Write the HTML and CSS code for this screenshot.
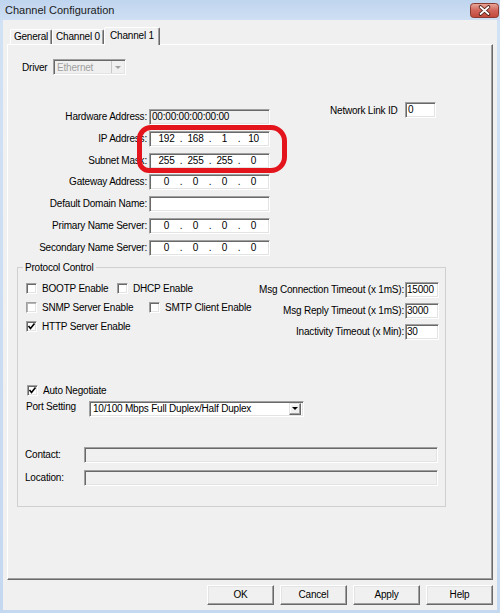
FILE: index.html
```html
<!DOCTYPE html>
<html lang="en">

<head>
    <meta charset="UTF-8">
    <title>Channel Configuration</title>
    <link rel="stylesheet" href="styles.css">
</head>

<body>
    <div class="window">
        <!-- title bar -->
        <div class="titlebar">
            <span class="title">Channel Configuration</span>
            <div class="close">
                <svg width="29" height="15" viewBox="0 0 29 15">
                    <defs>
                        <linearGradient id="cg" x1="0" y1="0" x2="0" y2="1">
                            <stop offset="0" stop-color="#e9a99b" />
                            <stop offset="0.5" stop-color="#d0645a" />
                            <stop offset="1" stop-color="#c3473a" />
                        </linearGradient>
                    </defs>
                    <rect x="0.5" y="0.5" width="28" height="14" rx="3" fill="url(#cg)" stroke="#8a3a30" />
                    <path d="M10.5 4 L18.5 11 M18.5 4 L10.5 11" stroke="#4a1a14" stroke-width="3.6" stroke-linecap="round" />
                    <path d="M10.5 4 L18.5 11 M18.5 4 L10.5 11" stroke="#ffffff" stroke-width="1.8" stroke-linecap="round" />
                </svg>
            </div>
        </div>

        <div class="client">
            <div class="tabs">
                <div class="tab tab_general">General</div>
                <div class="tab tab_ch0">Channel 0</div>
                <div class="tab tab_ch1 active">Channel 1</div>
            </div>

            <div class="panel">
                <div class="driver_row">
                    <span class="driver_label">Driver</span>
                    <div class="combo combo_disabled">
                        <span class="combo_text">Ethernet</span>
                        <span class="combo_btn"><i class="tri tri_gray"></i></span>
                    </div>
                </div>

                <div class="net_section">
                    <div class="addr_grid">
                        <label>Hardware Address:</label>
                        <div class="field field_readonly">00:00:00:00:00:00</div>

                        <label>IP Address:</label>
                        <div class="field ip"><span>192</span><i>.</i><span>168</span><i>.</i><span>1</span><i>.</i><span>10</span></div>

                        <label>Subnet Mask:</label>
                        <div class="field ip"><span>255</span><i>.</i><span>255</span><i>.</i><span>255</span><i>.</i><span>0</span></div>

                        <label>Gateway Address:</label>
                        <div class="field ip"><span>0</span><i>.</i><span>0</span><i>.</i><span>0</span><i>.</i><span>0</span></div>

                        <label>Default Domain Name:</label>
                        <div class="field"></div>

                        <label>Primary Name Server:</label>
                        <div class="field ip"><span>0</span><i>.</i><span>0</span><i>.</i><span>0</span><i>.</i><span>0</span></div>

                        <label>Secondary Name Server:</label>
                        <div class="field ip"><span>0</span><i>.</i><span>0</span><i>.</i><span>0</span><i>.</i><span>0</span></div>
                    </div>

                    <div class="link_id">
                        <label>Network Link ID</label>
                        <div class="field field_small">0</div>
                    </div>

                    <!-- red marker drawn over the IP / subnet rows -->
                    <div class="highlight"></div>
                </div>

                <fieldset class="protocol">
                    <legend>Protocol Control</legend>

                    <div class="proto_top">
                        <div class="checks">
                            <div class="check_row">
                                <div class="check check_w1"><span class="box"></span>BOOTP Enable</div>
                                <div class="check"><span class="box"></span>DHCP Enable</div>
                            </div>
                            <div class="check_row">
                                <div class="check check_w2"><span class="box box_light"></span>SNMP Server Enable</div>
                                <div class="check"><span class="box"></span>SMTP Client Enable</div>
                            </div>
                            <div class="check_row">
                                <div class="check"><span class="box checked"><svg width="9" height="9" viewBox="0 0 9 9"><path d="M1.5 4 L3.5 6.5 L7.5 1.5" fill="none" stroke="#000" stroke-width="1.6" /></svg></span>HTTP Server Enable</div>
                            </div>
                        </div>

                        <div class="timeouts">
                            <label>Msg Connection Timeout (x 1mS):</label>
                            <div class="field field_num">15000</div>
                            <label>Msg Reply Timeout (x 1mS):</label>
                            <div class="field field_num">3000</div>
                            <label>Inactivity Timeout (x Min):</label>
                            <div class="field field_num">30</div>
                        </div>
                    </div>

                    <div class="check_row auto_row">
                        <div class="check"><span class="box checked"><svg width="9" height="9" viewBox="0 0 9 9"><path d="M1.5 4 L3.5 6.5 L7.5 1.5" fill="none" stroke="#000" stroke-width="1.6" /></svg></span>Auto Negotiate</div>
                    </div>

                    <div class="port_row">
                        <span class="port_label">Port Setting</span>
                        <div class="combo combo_port">
                            <span class="combo_text">10/100 Mbps Full Duplex/Half Duplex</span>
                            <span class="combo_btn combo_btn_raised"><i class="tri"></i></span>
                        </div>
                    </div>

                    <div class="info_grid">
                        <label>Contact:</label>
                        <div class="field field_disabled"></div>
                        <label>Location:</label>
                        <div class="field field_disabled"></div>
                    </div>
                </fieldset>
            </div>

            <div class="buttons">
                <div class="btn">OK</div>
                <div class="btn">Cancel</div>
                <div class="btn">Apply</div>
                <div class="btn">Help</div>
            </div>
        </div>
    </div>
</body>

</html>
```

FILE: styles.css
```css
* {
    box-sizing: border-box;
    margin: 0;
    padding: 0;
}

body {
    width: 500px;
    height: 613px;
    overflow: hidden;
    font: 10px "Liberation Sans", Arial, sans-serif;
    letter-spacing: -0.2px;
    color: #000000;
}

.window {
    width: 500px;
    height: 613px;
    display: flex;
    flex-direction: column;
    padding: 0 3px 3px 3px;
    background: linear-gradient(#bfd4ee, #d2e2f5 24px, #c4d8f0);
}

.titlebar {
    height: 20px;
    display: flex;
    align-items: center;
    justify-content: space-between;
}

.title {
    margin-left: 2px;
    font-size: 11px;
    letter-spacing: 0;
    color: #1b1b1b;
}

.close {
    width: 29px;
    height: 15px;
    margin-right: -2px;
    margin-top: 1px;
}

.close svg {
    display: block;
}

.client {
    flex: 1;
    background-color: #f0f0f0;
    padding: 0 4px;
    display: flex;
    flex-direction: column;
}

/* tabs */
.tabs {
    height: 24px;
    display: flex;
    align-items: flex-end;
    padding-left: 3px;
}

.tab {
    height: 15px;
    line-height: 14px;
    text-align: center;
    border: 1px solid;
    border-bottom: none;
    border-color: #ffffff #696969 transparent #ffffff;
    box-shadow: inset -1px 0 #a0a0a0;
    border-radius: 2px 2px 0 0;
}

.tab_general {
    width: 42px;
}

.tab_ch0 {
    width: 52px;
}

.tab_ch1 {
    width: 56px;
}

.tab.active {
    height: 18px;
    line-height: 15px;
    margin-bottom: -1px;
    background-color: #f0f0f0;
    position: relative;
    z-index: 1;
}

.panel {
    height: 536px;
    border: 1px solid;
    border-color: #ffffff #696969 #696969 #ffffff;
    box-shadow: inset -1px -1px #a0a0a0;
    padding-top: 14px;
}

/* shared controls */
.field {
    height: 16px;
    line-height: 14px;
    background-color: #ffffff;
    border: 1px solid;
    border-color: #a0a0a0 #ffffff #ffffff #a0a0a0;
    box-shadow: inset 1px 1px #696969, inset -1px -1px #e3e3e3;
    padding-left: 2px;
    white-space: nowrap;
    overflow: hidden;
}

.field_readonly,
.field_disabled {
    background-color: #f0f0f0;
}

.field_num {
    padding-left: 1px;
}

.ip {
    display: flex;
    padding-left: 5px;
}

.ip span {
    width: 23px;
    text-align: center;
}

.ip i {
    width: 6px;
    font-style: normal;
    text-align: center;
}

.combo {
    height: 16px;
    display: flex;
    align-items: center;
    border: 1px solid;
    border-color: #a0a0a0 #ffffff #ffffff #a0a0a0;
    box-shadow: inset 1px 1px #696969, inset -1px -1px #e3e3e3;
    background-color: #ffffff;
    padding: 0 2px 0 3px;
}

.combo_text {
    flex: 1;
    white-space: nowrap;
}

.combo_btn {
    width: 12px;
    height: 12px;
    display: flex;
    align-items: center;
    justify-content: center;
    background-color: #f0f0f0;
    border-left: 1px solid #c8c8c8;
}

.combo_btn_raised {
    border: 1px solid;
    border-color: #e3e3e3 #696969 #696969 #e3e3e3;
    box-shadow: inset -1px -1px #a0a0a0, inset 1px 1px #ffffff;
}

.tri {
    width: 0;
    height: 0;
    border-left: 3px solid transparent;
    border-right: 3px solid transparent;
    border-top: 3px solid #000000;
}

.tri_gray {
    border-top-color: #a0a0a0;
}

.combo_disabled {
    background-color: #f0f0f0;
    color: #a0a0a0;
}

/* driver */
.driver_row {
    height: 16px;
    display: flex;
    align-items: center;
    margin-left: 14px;
}

.driver_label {
    width: 31px;
}

.driver_row .combo {
    width: 73px;
}

/* address block */
.net_section {
    position: relative;
    display: flex;
    align-items: flex-start;
    margin-top: 27px;
}

.addr_grid {
    display: grid;
    grid-template-columns: 110px 121px;
    grid-auto-rows: 16px;
    column-gap: 2px;
    row-gap: 5.83px;
    margin: 7px 0 0 29px;
}

.addr_grid label,
.timeouts label {
    text-align: right;
    line-height: 16px;
    white-space: nowrap;
}

.link_id {
    display: flex;
    align-items: center;
    height: 16px;
    margin-left: 60px;
}

.link_id label {
    width: 75px;
}

.field_small {
    width: 31px;
}

.highlight {
    position: absolute;
    left: 129px;
    top: 23px;
    width: 150px;
    height: 48px;
    border: 5px solid #e3141c;
    border-radius: 14px 16px 16px 12px;
}

/* protocol control */
.protocol {
    margin: 6px 0 0 9px;
    width: 429px;
    height: 245px;
    border: 1px solid #d0d0d0;
    padding: 5px 6px 0 8px;
}

.protocol legend {
    padding: 0 2px;
    margin-left: -3px;
    line-height: 12px;
}

.proto_top {
    display: flex;
    justify-content: space-between;
    align-items: flex-start;
}

.check_row {
    height: 19px;
    display: flex;
    align-items: center;
}

.check {
    display: flex;
    align-items: center;
    white-space: nowrap;
}

.check_w1 {
    width: 91px;
}

.check_w2 {
    width: 123px;
}

.box {
    width: 11px;
    height: 11px;
    margin-right: 5px;
    display: flex;
    align-items: center;
    justify-content: center;
    background-color: #ffffff;
    border: 1px solid;
    border-color: #a0a0a0 #ffffff #ffffff #a0a0a0;
    box-shadow: inset 1px 1px #696969, inset -1px -1px #e3e3e3;
}

.box_light {
    box-shadow: inset 1px 1px #b4b4b4, inset -1px -1px #e3e3e3;
}

.box svg {
    display: block;
}

.timeouts {
    display: grid;
    grid-template-columns: auto 34px;
    grid-auto-rows: 16px;
    column-gap: 1px;
    row-gap: 5px;
    margin-top: 3px;
}

.auto_row {
    margin: 41px 0 0 1px;
}

.port_row {
    display: flex;
    align-items: flex-start;
    margin-top: 1px;
}

.port_label {
    width: 63px;
    line-height: 12px;
}

.combo_port {
    width: 215px;
}

.info_grid {
    display: grid;
    grid-template-columns: 59px 354px;
    grid-auto-rows: 16px;
    row-gap: 7px;
    margin: 30px 0 0 -1px;
}

.info_grid label {
    line-height: 16px;
}

/* dialog buttons */
.buttons {
    display: flex;
    justify-content: flex-end;
    gap: 6px;
    margin-top: 5px;
}

.btn {
    width: 67px;
    height: 20px;
    line-height: 18px;
    text-align: center;
    border: 1px solid;
    border-color: #ffffff #696969 #696969 #ffffff;
    box-shadow: inset -1px -1px #a0a0a0, inset 1px 1px #e3e3e3;
}
```
